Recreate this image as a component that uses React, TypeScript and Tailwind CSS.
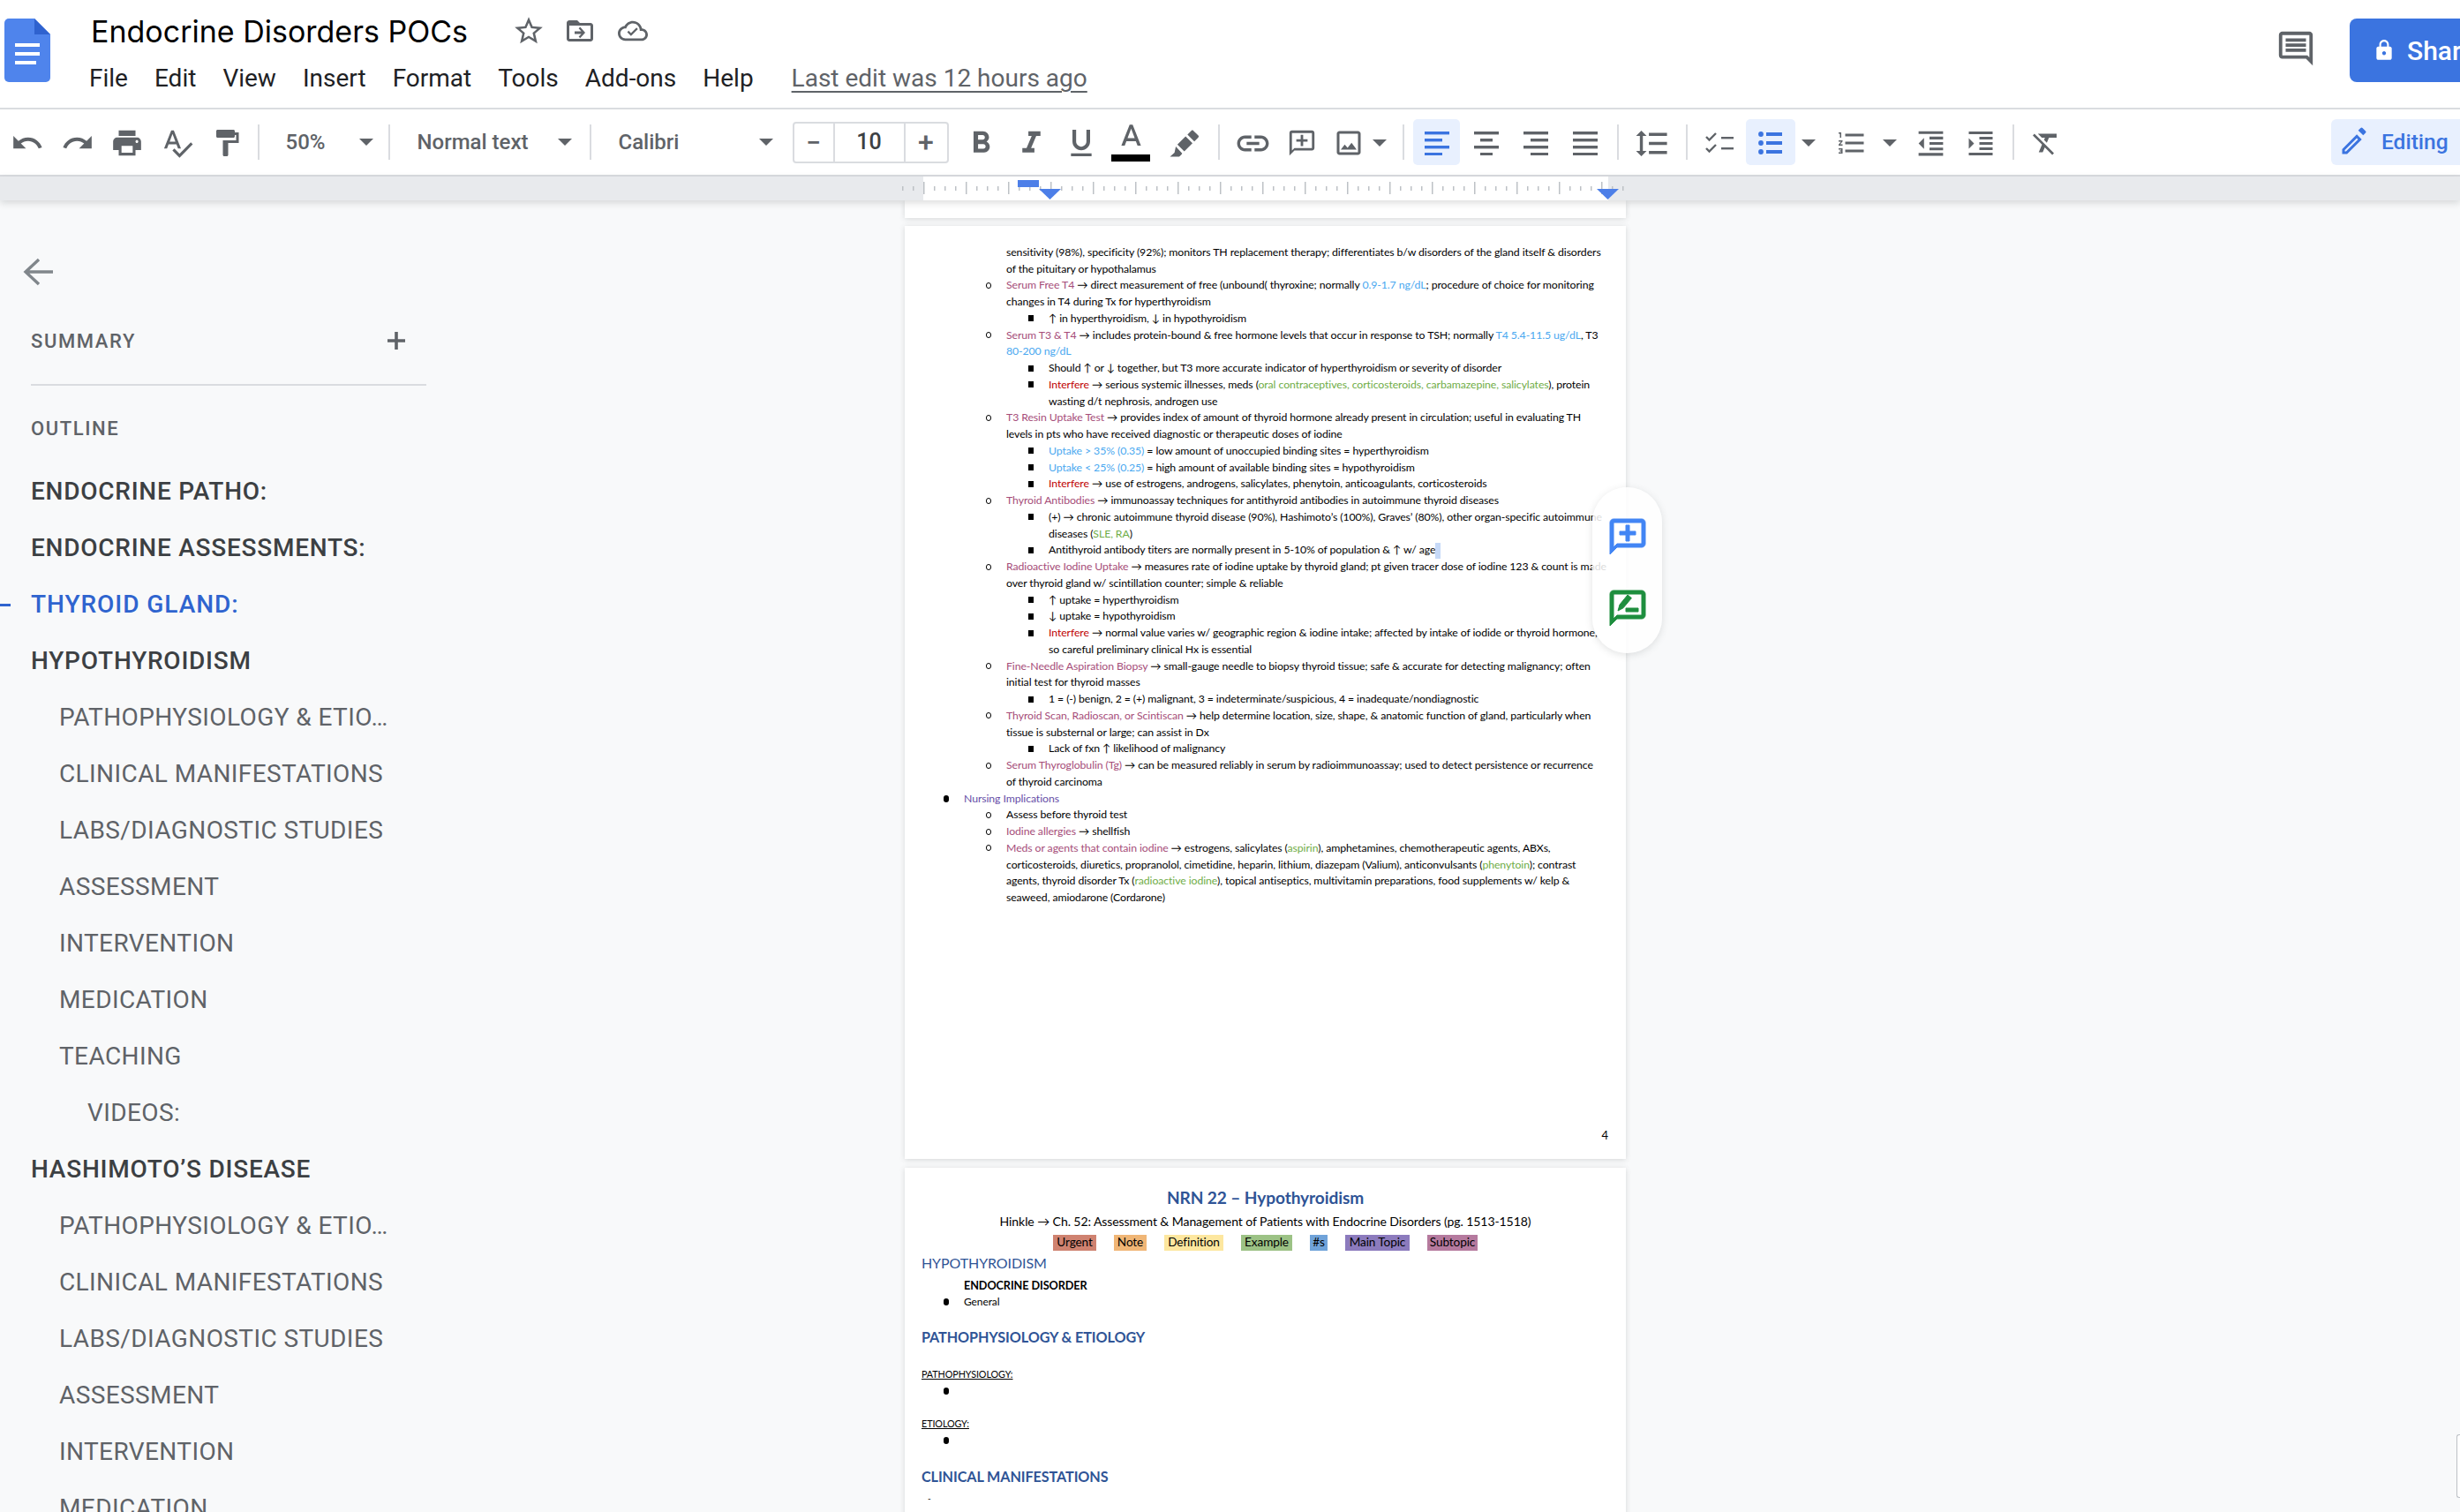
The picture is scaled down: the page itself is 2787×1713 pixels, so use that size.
const Ic = ({ d, size = 38, className = "fill-[#5f6368]" }: { d: string; size?: number; className?: string }) => (
  <svg width={size} height={size} viewBox="0 0 24 24" className={className}>
    <path d={d} />
  </svg>
);

const Caret = () => (
  <svg width="16" height="8" viewBox="0 0 16 8" className="fill-[#5f6368]">
    <path d="M0 0h16L8 8z" />
  </svg>
);

const Sep = ({ ml }: { ml: string }) => <div className={`h-[40px] w-[2px] shrink-0 bg-[#dadce0] ${ml}`} />;

const Cell = ({ w, ml = "", active = false, children }: any) => (
  <div className={`flex h-[52px] shrink-0 items-center justify-center [&>svg]:translate-y-[1px] ${w} ${ml} ${active ? "rounded-[5px] bg-[#e8f0fe]" : ""}`}>
    {children}
  </div>
);

const Lines = ({ widths, className = "fill-[#5f6368]" }: { widths: number[]; className?: string }) => (
  <svg width="28" height="28" viewBox="0 0 28 28" className={className}>
    {widths.map((w, i) => (
      <rect key={i} x={widths[4] === 0 ? 0 : widths[4] === 1 ? (28 - w) / 2 : 28 - w} y={i * 8 + 1} width={w} height="3.4" />
    )).slice(0, 4)}
  </svg>
);

const icons = {
  undo: "M12.5 8c-2.65 0-5.05.99-6.9 2.6L2 7v9h9l-3.62-3.62c1.39-1.16 3.16-1.88 5.12-1.88 3.54 0 6.55 2.31 7.6 5.5l2.37-.78C21.08 11.03 17.15 8 12.5 8z",
  redo: "M18.4 10.6C16.55 8.99 14.15 8 11.5 8c-4.65 0-8.58 3.03-9.96 7.22L3.9 16c1.05-3.19 4.05-5.5 7.6-5.5 1.95 0 3.73.72 5.12 1.88L13 16h9V7l-3.6 3.6z",
  print: "M19 8H5c-1.66 0-3 1.34-3 3v6h4v4h12v-4h4v-6c0-1.66-1.34-3-3-3zm-3 11H8v-5h8v5zm3-7c-.55 0-1-.45-1-1s.45-1 1-1 1 .45 1 1-.45 1-1 1zm-1-9H6v4h12V3z",
  spell: "M12.45 16h2.09L9.43 3H7.57L2.46 16h2.09l1.12-3h5.64l1.14 3zm-6.02-5L8.5 5.48 10.57 11H6.43zm15.16.59l-8.09 8.09L9.83 16l-1.41 1.41 5.09 5.09L23 13l-1.41-1.41z",
  paint: "M18 4V3c0-.55-.45-1-1-1H5c-.55 0-1 .45-1 1v4c0 .55.45 1 1 1h12c.55 0 1-.45 1-1V6h1v4H9v11c0 .55.45 1 1 1h2c.55 0 1-.45 1-1v-9h8V4h-3z",
  bold: "M15.6 10.79c.97-.67 1.65-1.77 1.65-2.79 0-2.26-1.75-4-4-4H7v14h7.04c2.09 0 3.71-1.7 3.71-3.79 0-1.52-.86-2.82-2.15-3.42zM10 6.5h3c.83 0 1.5.67 1.5 1.5s-.67 1.5-1.5 1.5h-3v-3zm3.5 9H10v-3h3.5c.83 0 1.5.67 1.5 1.5s-.67 1.5-1.5 1.5z",
  italic: "M10 4v3h2.21l-3.42 8H6v3h8v-3h-2.21l3.42-8H18V4z",
  underline: "M12 17c3.31 0 6-2.69 6-6V3h-2.5v8c0 1.93-1.57 3.5-3.5 3.5S8.5 12.93 8.5 11V3H6v8c0 3.31 2.69 6 6 6zm-7 2v2h14v-2H5z",
  color: "M11 3L5.5 17h2.25l1.12-3h6.25l1.12 3h2.25L13 3h-2zm-1.38 9L12 5.67 14.38 12H9.62z",
  hilite: "M17.2 2.6l-3 3 5.2 5.2 3-3c.4-.4.4-1 0-1.4l-3.8-3.8c-.4-.4-1-.4-1.4 0zM12.8 7L6.6 13.2l5.2 5.2 6.2-6.2zM5.4 14.6l-1 4.8-3.4 3h7l1.6-1.6 .6-1z",
  link: "M3.9 12c0-1.71 1.39-3.1 3.1-3.1h4V7H7c-2.76 0-5 2.24-5 5s2.24 5 5 5h4v-1.9H7c-1.71 0-3.1-1.39-3.1-3.1zM8 13h8v-2H8v2zm9-6h-4v1.9h4c1.71 0 3.1 1.39 3.1 3.1s-1.39 3.1-3.1 3.1h-4V17h4c2.76 0 5-2.24 5-5s-2.24-5-5-5z",
  comment: "M20 2H4c-1.1 0-2 .9-2 2v18l4-4h14c1.1 0 2-.9 2-2V4c0-1.1-.9-2-2-2zm0 14H6l-2 2V4h16v12zM13 5.5h-2V9H7.5v2H11v3.5h2V11h3.5V9H13z",
  image: "M19 5v14H5V5h14m0-2H5c-1.1 0-2 .9-2 2v14c0 1.1.9 2 2 2h14c1.1 0 2-.9 2-2V5c0-1.1-.9-2-2-2zM14.14 11.86l-3 3.87L9 13.14 6 17h12l-3.86-5.14z",
  spacing: "M6 7h2.5L5 3.5 1.5 7H4v10H1.5L5 20.5 8.5 17H6V7zm4-2v2h12V5H10zm0 14h12v-2H10v2zm0-6h12v-2H10v2z",
  numbered: "M2 17h2v.5H3v1h1v.5H2v1h3v-4H2v1zm1-9h1V4H2v1h1v3zm-1 3h1.8L2 13.1v.9h3v-1H3.2L5 10.9V10H2v1zm5-6v2h14V5H7zm0 14h14v-2H7v2zm0-6h14v-2H7v2z",
  indentLess: "M11 17h10v-2H11v2zm-8-5l4 4V8l-4 4zm0 9h18v-2H3v2zM3 3v2h18V3H3zm8 6h10V7H11v2zm0 4h10v-2H11v2z",
  indentMore: "M3 21h18v-2H3v2zM3 8v8l4-4-4-4zm8 9h10v-2H11v2zM3 3v2h18V3H3zm8 6h10V7H11v2zm0 4h10v-2H11v2z",
  clear: "M3.27 5L2 6.27l6.97 6.97L6.5 19h3l1.57-3.66L16.73 21 18 19.73 3.55 5.27 3.27 5zM6 5v.18L8.82 8h2.4l-.72 1.68 2.1 2.1L14.21 8H20V5H6z",
  star: "M22 9.24l-7.19-.62L12 2 9.19 8.63 2 9.24l5.46 4.73L5.82 21 12 17.27 18.18 21l-1.63-7.03L22 9.24zM12 15.4l-3.76 2.27 1-4.28-3.32-2.88 4.38-.38L12 6.1l1.71 4.04 4.38.38-3.32 2.88 1 4.28L12 15.4z",
  folder: "M20 6h-8l-2-2H4c-1.1 0-2 .9-2 2v12c0 1.1.9 2 2 2h16c1.1 0 2-.9 2-2V8c0-1.1-.9-2-2-2zm0 12H4V8h16v10zM12.16 17.5L16 13.25 12.16 9l-1.1 1.1 2 2.15H8v2h5.06l-2 2.15z",
  cloud: "M19.35 10.04C18.67 6.59 15.64 4 12 4 9.11 4 6.6 5.64 5.35 8.04 2.34 8.36 0 10.91 0 14c0 3.31 2.69 6 6 6h13c2.76 0 5-2.24 5-5 0-2.64-2.05-4.78-4.65-4.96zM19 18H6c-2.21 0-4-1.79-4-4s1.79-4 4-4h.71C7.37 7.69 9.48 6 12 6c3.04 0 5.5 2.46 5.5 5.5v.5H19c1.66 0 3 1.34 3 3s-1.34 3-3 3zM10.5 16l-3-3 1.1-1.1 1.9 1.9 4.4-4.4 1.1 1.1z",
  chat: "M21.99 4c0-1.1-.89-2-1.99-2H4c-1.1 0-2 .9-2 2v12c0 1.1.9 2 2 2h14l4 4-.01-18zM20 4v13.17L18.83 16H4V4h16zM6 12h12v2H6zM6 9h12v2H6zM6 6h12v2H6z",
  lock: "M18 8h-1V6c0-2.76-2.24-5-5-5S7 3.24 7 6v2H6c-1.1 0-2 .9-2 2v10c0 1.1.9 2 2 2h12c1.1 0 2-.9 2-2V10c0-1.1-.9-2-2-2zm-6 9c-1.1 0-2-.9-2-2s.9-2 2-2 2 .9 2 2-.9 2-2 2zm3.1-9H8.9V6c0-1.71 1.39-3.1 3.1-3.1 1.71 0 3.1 1.39 3.1 3.1v2z",
  pencil: "M3 17.25V21h3.75L17.81 9.94l-3.75-3.75L3 17.25zM5.92 19H5v-.92l9.06-9.06.92.92L5.92 19zM20.71 5.04a1 1 0 0 0 0-1.41l-2.34-2.34a1 1 0 0 0-1.41 0l-1.83 1.83 3.75 3.75 1.83-1.83z",
  suggest: "M20 2H4c-1.1 0-2 .9-2 2v18l4-4h14c1.1 0 2-.9 2-2V4c0-1.1-.9-2-2-2zm0 14H6l-2 2V4h16v12zM6.5 13.5l1-3.5 4.5-5.5 2.2 1.8-4.7 5.6-3 1.6zM11 12h7v2h-7z",
};

const Header = () => (
  <header className="flex h-[122px] shrink-0 bg-white">
    <svg width="52" height="72" viewBox="0 0 52 72" className="ml-[5px] mt-[21px] shrink-0">
      <path d="M5 0h29l18 18v49a5 5 0 0 1-5 5H5a5 5 0 0 1-5-5V5a5 5 0 0 1 5-5z" fill="#4f84ec" />
      <path d="M34 0l18 18H34z" fill="#2f62cf" />
      <rect x="12" y="28" width="28" height="4" fill="#fff" />
      <rect x="12" y="38" width="28" height="4" fill="#fff" />
      <rect x="12" y="48" width="24" height="4" fill="#fff" />
    </svg>
    <div className="ml-[46px] flex flex-col pt-[15px]">
      <div className="flex h-[40px] items-center">
        <span className="w-[477px] whitespace-nowrap font-['Inter',sans-serif] text-[34px] text-black">Endocrine Disorders POCs</span>
        <Ic d={icons.star} size={38} />
        <div className="ml-[21px]"><Ic d={icons.folder} size={36} /></div>
        <div className="ml-[25px]"><Ic d={icons.cloud} size={34} /></div>
      </div>
      <div className="-ml-[2px] mt-[16px] flex h-[36px] items-center gap-[30px] font-['Roboto',sans-serif] text-[28px] text-[#202124]">
        <span>File</span>
        <span>Edit</span>
        <span>View</span>
        <span>Insert</span>
        <span>Format</span>
        <span>Tools</span>
        <span>Add-ons</span>
        <span>Help</span>
        <span className="ml-[13px] text-[#5f6368] underline underline-offset-[5px]">Last edit was 12 hours ago</span>
      </div>
    </div>
    <div className="ml-auto mt-[32px] shrink-0"><Ic d={icons.chat} size={46} /></div>
    <div className="ml-[38px] mt-[21px] flex h-[72px] w-[125px] shrink-0 items-center overflow-hidden rounded-l-[8px] bg-[#3b74e0] pl-[26px] font-['Roboto',sans-serif] text-[30px] font-medium text-white">
      <Ic d={icons.lock} size={26} className="shrink-0 fill-white" />
      <span className="ml-[13px] whitespace-nowrap">Share</span>
    </div>
  </header>
);

const Toolbar = () => (
  <div className="flex h-[78px] shrink-0 items-center border-y-2 border-[#dadce0] bg-white pl-[3px] font-['Roboto',sans-serif] text-[#5f6368]">
    <Cell w="w-[56.5px]"><Ic d={icons.undo} /></Cell>
    <Cell w="w-[56.5px]"><Ic d={icons.redo} /></Cell>
    <Cell w="w-[56.5px]"><Ic d={icons.print} /></Cell>
    <Cell w="w-[56.5px]"><Ic d={icons.spell} /></Cell>
    <Cell w="w-[56.5px]"><Ic d={icons.paint} size={36} /></Cell>
    <Sep ml="ml-[6px]" />
    <div className="flex h-[40px] w-[146px] shrink-0 items-center justify-between pl-[30px] pr-[17px] text-[24px] font-medium"><span>50%</span><Caret /></div>
    <Sep ml="" />
    <div className="flex h-[40px] w-[226px] shrink-0 items-center justify-between pl-[31px] pr-[20px] text-[24px] font-medium"><span>Normal text</span><Caret /></div>
    <Sep ml="" />
    <div className="flex h-[40px] w-[228px] shrink-0 items-center justify-between pl-[31px] pr-[22px] text-[24px] font-medium"><span>Calibri</span><Caret /></div>
    <div className="flex h-[47px] w-[177px] shrink-0 rounded-[4px] border-2 border-[#dadce0]">
      <div className="flex w-[46px] items-center justify-center border-r-2 border-[#dadce0] text-[30px] font-medium">−</div>
      <div className="flex w-[80px] items-center justify-center border-r-2 border-[#dadce0] text-[25px] font-medium text-[#3c4043]">10</div>
      <div className="flex flex-1 items-center justify-center text-[32px] font-medium">+</div>
    </div>
    <Cell w="w-[56.5px]" ml="ml-[8.75px]"><Ic d={icons.bold} size={41} /></Cell>
    <Cell w="w-[56.5px]"><Ic d={icons.italic} size={41} /></Cell>
    <Cell w="w-[56.5px]"><Ic d={icons.underline} size={40} /></Cell>
    <div className="flex h-[52px] w-[56.5px] shrink-0 flex-col items-center justify-start pt-[1px]">
      <Ic d={icons.color} size={41} />
      <div className="-mt-[2px] h-[8px] w-[44px] shrink-0 bg-black" />
    </div>
    <Cell w="w-[56.5px]" ml="ml-[4.75px]"><Ic d={icons.hilite} size={36} /></Cell>
    <Sep ml="ml-[9.25px]" />
    <Cell w="w-[55.5px]" ml="ml-[9.5px]"><Ic d={icons.link} size={43} /></Cell>
    <Cell w="w-[55.5px]"><Ic d={icons.comment} size={34} /></Cell>
    <Cell w="w-[52px]"><Ic d={icons.image} size={36} /></Cell>
    <Cell w="w-[18px]"><Caret /></Cell>
    <Sep ml="ml-[17px]" />
    <Cell w="w-[52.5px]" ml="ml-[10px]" active><Lines widths={[28, 20, 28, 20, 0]} className="fill-[#3b74e0]" /></Cell>
    <Cell w="w-[60px]"><Lines widths={[28, 14, 28, 14, 1]} /></Cell>
    <Cell w="w-[52px]"><Lines widths={[28, 20, 28, 20, 2]} /></Cell>
    <Cell w="w-[60px]"><Lines widths={[28, 28, 28, 28, 0]} /></Cell>
    <Sep ml="ml-[6px]" />
    <Cell w="w-[76px]"><Ic d={icons.spacing} size={41} /></Cell>
    <Sep ml="" />
    <Cell w="w-[66px]">
      <svg width="32" height="26" viewBox="0 0 32 26" className="ml-[6px] fill-[#5f6368] stroke-[#5f6368]">
        <path d="M1 6l3.5 3.5L12 2M1 19l3.5 3.5L12 15" fill="none" strokeWidth="2.4" />
        <rect x="18" y="6" width="14" height="2.4" strokeWidth="0" />
        <rect x="18" y="18" width="14" height="2.4" strokeWidth="0" />
      </svg>
    </Cell>
    <Cell w="w-[56px]" active>
      <svg width="27" height="26" viewBox="0 0 27 26" className="fill-[#3b74e0]">
        <circle cx="3" cy="3" r="2.9" />
        <circle cx="3" cy="13" r="2.9" />
        <circle cx="3" cy="23" r="2.9" />
        <rect x="9" y="1" width="18" height="4" />
        <rect x="9" y="11" width="18" height="4" />
        <rect x="9" y="21" width="18" height="4" />
      </svg>
    </Cell>
    <Cell w="w-[30px]"><Caret /></Cell>
    <Cell w="w-[68px]"><Ic d={icons.numbered} size={36} /></Cell>
    <Cell w="w-[18px]"><Caret /></Cell>
    <Cell w="w-[76px]"><Ic d={icons.indentLess} size={37} /></Cell>
    <Cell w="w-[36px]"><Ic d={icons.indentMore} size={37} /></Cell>
    <Sep ml="ml-[18px]" />
    <Cell w="w-[72px]"><Ic d={icons.clear} size={36} /></Cell>
    <div className="ml-auto flex h-[52px] w-[146px] shrink-0 items-center rounded-l-[6px] bg-[#e8f0fe] pl-[8px] text-[24.5px] font-medium text-[#3b74e0]">
      <Ic d={icons.pencil} size={36} className="fill-[#3b74e0]" />
      <span className="ml-[13px]">Editing</span>
    </div>
  </div>
);

const ticks = Array.from({ length: 69 }, (_, i) => 1022 + i * 12);

const Ruler = () => (
  <div className="relative z-10 h-[27px] shrink-0 bg-[#e8eaed] shadow-[0_3px_8px_rgba(60,64,67,0.18)]">
    <svg width="2787" height="27" viewBox="0 0 2787 27" className="block">
      <rect x="1046" y="0" width="776" height="27" fill="#fff" />
      {ticks.map((x) => (
        <rect key={x} x={x} y={(x - 1286) % 48 === 0 ? 6 : 11} width="1.5" height={(x - 1286) % 48 === 0 ? 14 : 5} fill="#bdc1c6" />
      ))}
      <rect x="1153" y="4" width="24" height="8" fill="#4d7fe8" />
      <path d="M1177 14h25l-12.5 12z" fill="#4d7fe8" />
      <path d="M1809 14h25l-12.5 12z" fill="#4d7fe8" />
    </svg>
  </div>
);

const outline: [string, number][] = [
  ["ENDOCRINE PATHO:", 1],
  ["ENDOCRINE ASSESSMENTS:", 1],
  ["THYROID GLAND:", 0],
  ["HYPOTHYROIDISM", 1],
  ["PATHOPHYSIOLOGY & ETIO…", 2],
  ["CLINICAL MANIFESTATIONS", 2],
  ["LABS/DIAGNOSTIC STUDIES", 2],
  ["ASSESSMENT", 2],
  ["INTERVENTION", 2],
  ["MEDICATION", 2],
  ["TEACHING", 2],
  ["VIDEOS:", 3],
  ["HASHIMOTO’S DISEASE", 1],
  ["PATHOPHYSIOLOGY & ETIO…", 2],
  ["CLINICAL MANIFESTATIONS", 2],
  ["LABS/DIAGNOSTIC STUDIES", 2],
  ["ASSESSMENT", 2],
  ["INTERVENTION", 2],
  ["MEDICATION", 2],
];

const outlineStyle: Record<number, string> = {
  0: "pl-[35px] font-medium tracking-[0.95px] text-[#2f64cf]",
  1: "pl-[35px] font-medium tracking-[0.75px] text-[#3c4043]",
  2: "pl-[67px] tracking-[0.4px] text-[#5f6368]",
  3: "pl-[99px] tracking-[0.4px] text-[#5f6368]",
};

const Sidebar = () => (
  <aside className="w-[490px] shrink-0 pt-[65px] font-['Roboto',sans-serif]">
    <svg width="34" height="32" viewBox="0 0 34 32" className="ml-[26px] fill-none stroke-[#80868b] stroke-[3.4]">
      <path d="M34 16H3M18 2L3 16l15 14" />
    </svg>
    <div className="ml-[35px] mt-[42px] flex h-[40px] w-[448px] items-center justify-between pr-[24px] text-[22px] font-medium tracking-[1.6px] text-[#5f6368]">
      <span>SUMMARY</span>
      <svg width="20" height="20" viewBox="0 0 20 20" className="fill-[#5f6368]">
        <path d="M8.2 0h3.6v8.2H20v3.6h-8.2V20H8.2v-8.2H0V8.2h8.2z" />
      </svg>
    </div>
    <div className="ml-[35px] mt-[29px] h-[2px] w-[448px] bg-[#dadce0]" />
    <div className="ml-[35px] mt-[33px] flex h-[30px] items-center text-[22px] font-medium tracking-[1.6px] text-[#5f6368]">OUTLINE</div>
    <div className="mt-[24.5px]">
      {outline.map(([t, l], i) => (
        <div key={i} className={`relative flex h-[64px] items-center whitespace-nowrap text-[28px] ${outlineStyle[l]}`}>
          {l === 0 && <div className="absolute left-0 top-[31px] h-[3px] w-[12px] bg-[#2f64cf]" />}
          {t}
        </div>
      ))}
    </div>
  </aside>
);

type Seg = string | [string, "s" | "b" | "g" | "r" | "p"];
const tone = {
  s: "text-[#a64d79]",
  b: "text-[#4aa8f0]",
  g: "text-[#70ad47]",
  r: "text-[#c00000]",
  p: "text-[#674ea7]",
};

const gutter: Record<number, string> = {
  1: "w-[67px]",
  2: "w-[115px]",
  3: "w-[163px]",
};

const Bullet = ({ level }: { level: number }) => {
  if (level === 1) return <span className="h-[8px] w-[6px] rounded-full bg-black" />;
  if (level === 2) return <span className="h-[7px] w-[6px] rounded-full border border-black" />;
  return <span className="h-[7px] w-[6px] bg-black" />;
};

const Line = ({ level, bullet = false, segs, children }: { level: number; bullet?: boolean; segs: Seg[]; children?: any }) => (
  <div className="flex h-[18.75px] shrink-0 items-center whitespace-nowrap">
    <div className={`flex shrink-0 justify-end pr-[17px] ${gutter[level]}`}>{bullet && <Bullet level={level} />}</div>
    <span>
      {segs.map((s, i) => (typeof s === "string" ? <span key={i}>{s}</span> : <span key={i} className={tone[s[1]]}>{s[0]}</span>))}
      {children}
    </span>
  </div>
);

const lines: [number, boolean, Seg[]][] = [
  [2, false, ["sensitivity (98%), specificity (92%); monitors TH replacement therapy; differentiates b/w disorders of the gland itself & disorders"]],
  [2, false, ["of the pituitary or hypothalamus"]],
  [2, true, [["Serum Free T4", "s"], " → direct measurement of free (unbound( thyroxine; normally ", ["0.9-1.7 ng/dL", "b"], "; procedure of choice for monitoring"]],
  [2, false, ["changes in T4 during Tx for hyperthyroidism"]],
  [3, true, ["↑ in hyperthyroidism, ↓ in hypothyroidism"]],
  [2, true, [["Serum T3 & T4", "s"], " → includes protein-bound & free hormone levels that occur in response to TSH; normally ", ["T4 5.4-11.5 ug/dL", "b"], ", T3"]],
  [2, false, [["80-200 ng/dL", "b"]]],
  [3, true, ["Should ↑ or ↓ together, but T3 more accurate indicator of hyperthyroidism or severity of disorder"]],
  [3, true, [["Interfere", "r"], " → serious systemic illnesses, meds (", ["oral contraceptives, corticosteroids, carbamazepine, salicylates", "g"], "), protein"]],
  [3, false, ["wasting d/t nephrosis, androgen use"]],
  [2, true, [["T3 Resin Uptake Test", "s"], " → provides index of amount of thyroid hormone already present in circulation; useful in evaluating TH"]],
  [2, false, ["levels in pts who have received diagnostic or therapeutic doses of iodine"]],
  [3, true, [["Uptake > 35% (0.35)", "b"], " = low amount of unoccupied binding sites = hyperthyroidism"]],
  [3, true, [["Uptake < 25% (0.25)", "b"], " = high amount of available binding sites = hypothyroidism"]],
  [3, true, [["Interfere", "r"], " → use of estrogens, androgens, salicylates, phenytoin, anticoagulants, corticosteroids"]],
  [2, true, [["Thyroid Antibodies", "s"], " → immunoassay techniques for antithyroid antibodies in autoimmune thyroid diseases"]],
  [3, true, ["(+) → chronic autoimmune thyroid disease (90%), Hashimoto’s (100%), Graves’ (80%), other organ-specific autoimmune"]],
  [3, false, ["diseases (", ["SLE, RA", "g"], ")"]],
];

const lines2: [number, boolean, Seg[]][] = [
  [2, true, [["Radioactive Iodine Uptake", "s"], " → measures rate of iodine uptake by thyroid gland; pt given tracer dose of iodine 123 & count is made"]],
  [2, false, ["over thyroid gland w/ scintillation counter; simple & reliable"]],
  [3, true, ["↑ uptake = hyperthyroidism"]],
  [3, true, ["↓ uptake = hypothyroidism"]],
  [3, true, [["Interfere", "r"], " → normal value varies w/ geographic region & iodine intake; affected by intake of iodide or thyroid hormone,"]],
  [3, false, ["so careful preliminary clinical Hx is essential"]],
  [2, true, [["Fine-Needle Aspiration Biopsy", "s"], " → small-gauge needle to biopsy thyroid tissue; safe & accurate for detecting malignancy; often"]],
  [2, false, ["initial test for thyroid masses"]],
  [3, true, ["1 = (-) benign, 2 = (+) malignant, 3 = indeterminate/suspicious, 4 = inadequate/nondiagnostic"]],
  [2, true, [["Thyroid Scan, Radioscan, or Scintiscan", "s"], " → help determine location, size, shape, & anatomic function of gland, particularly when"]],
  [2, false, ["tissue is substernal or large; can assist in Dx"]],
  [3, true, ["Lack of fxn ↑ likelihood of malignancy"]],
  [2, true, [["Serum Thyroglobulin (Tg)", "s"], " → can be measured reliably in serum by radioimmunoassay; used to detect persistence or recurrence"]],
  [2, false, ["of thyroid carcinoma"]],
  [1, true, [["Nursing Implications", "p"]]],
  [2, true, ["Assess before thyroid test"]],
  [2, true, [["Iodine allergies", "s"], " → shellfish"]],
  [2, true, [["Meds or agents that contain iodine", "s"], " → estrogens, salicylates (", ["aspirin", "g"], "), amphetamines, chemotherapeutic agents, ABXs,"]],
  [2, false, ["corticosteroids, diuretics, propranolol, cimetidine, heparin, lithium, diazepam (Valium), anticonvulsants (", ["phenytoin", "g"], "); contrast"]],
  [2, false, ["agents, thyroid disorder Tx (", ["radioactive iodine", "g"], "), topical antiseptics, multivitamin preparations, food supplements w/ kelp &"]],
  [2, false, ["seaweed, amiodarone (Cordarone)"]],
];

const labels = [
  ["Urgent", "bg-[#cf8270]", "w-[49px]"],
  ["Note", "bg-[#f0b676]", "w-[37px]"],
  ["Definition", "bg-[#fde79f]", "w-[67px]"],
  ["Example", "bg-[#9cc285]", "w-[58px]"],
  ["#s", "bg-[#70a3d9]", "w-[20px]"],
  ["Main Topic", "bg-[#8c7bbd]", "w-[73px]"],
  ["Subtopic", "bg-[#b57a9e]", "w-[57px]"],
];

const pageClass = "w-[817px] bg-white text-[12.3px] tracking-[-0.1px] text-black shadow-[0_1px_6px_rgba(60,64,67,0.18)]";

const Doc = () => (
  <main className="ml-[535px] flex w-[817px] shrink-0 flex-col font-['Lato',sans-serif]">
    <div className={`h-[20px] shrink-0 ${pageClass}`} />
    <div className={`mt-[9px] flex h-[1057px] shrink-0 flex-col pt-[20.6px] ${pageClass}`}>
      {lines.map(([l, b, s], i) => <Line key={i} level={l} bullet={b} segs={s} />)}
      <Line level={3} bullet segs={["Antithyroid antibody titers are normally present in 5-10% of population & ↑ w/ age"]}>
        <span className="inline-block h-[18px] w-[6px] align-middle bg-[#c6d9f7]" />
      </Line>
      {lines2.map(([l, b, s], i) => <Line key={i} level={l} bullet={b} segs={s} />)}
      <div className="mr-[20px] mt-auto pb-[17px] text-right text-[13px]">4</div>
    </div>
    <div className={`mt-[9.5px] h-[1000px] shrink-0 pt-[24px] ${pageClass}`}>
      <div className="flex h-[22px] items-center justify-center text-[19.1px] font-bold text-[#2f5496]">NRN 22 – Hypothyroidism</div>
      <div className="mt-[5.5px] flex h-[20px] items-center justify-center text-[14.05px]">Hinkle → Ch. 52: Assessment &amp; Management of Patients with Endocrine Disorders (pg. 1513-1518)</div>
      <div className="ml-[168px] mt-[4.5px] flex h-[18px] gap-[20px] text-[13.6px]">
        {labels.map(([t, bg, w]) => (
          <div key={t} className={`flex shrink-0 items-center justify-center whitespace-nowrap ${bg} ${w}`}>{t}</div>
        ))}
      </div>
      <div className="ml-[19px] mt-[3px] flex h-[22px] items-center text-[16px] text-[#2f5496]">HYPOTHYROIDISM</div>
      <div className="ml-[67px] mt-[6px] flex h-[18px] items-center text-[12.7px] font-bold">ENDOCRINE DISORDER</div>
      <div className="mt-[1.5px] flex h-[16px] items-center text-[12px]">
        <div className="flex w-[67px] shrink-0 justify-end pr-[17px]"><Bullet level={1} /></div>General
      </div>
      <div className="ml-[19px] mt-[21px] flex h-[22px] items-center text-[16.2px] font-bold text-[#2f5496]">PATHOPHYSIOLOGY &amp; ETIOLOGY</div>
      <div className="ml-[19px] mt-[23px] flex h-[16px] items-center text-[10.8px] underline">PATHOPHYSIOLOGY:</div>
      <div className="mt-[4px] flex h-[14px] items-center">
        <div className="flex w-[67px] justify-end pr-[17px]"><Bullet level={1} /></div>
      </div>
      <div className="ml-[19px] mt-[22px] flex h-[16px] items-center text-[10.8px] underline">ETIOLOGY:</div>
      <div className="mt-[4px] flex h-[14px] items-center">
        <div className="flex w-[67px] justify-end pr-[17px]"><Bullet level={1} /></div>
      </div>
      <div className="ml-[19px] mt-[23px] flex h-[22px] items-center text-[16.2px] font-bold text-[#2f5496]">CLINICAL MANIFESTATIONS</div>
      <div className="ml-[26px] mt-[6px] flex h-[14px] items-center text-[10px]">-</div>
    </div>
  </main>
);

export default function App() {
  return (
    <div className="relative flex h-[1713px] w-[2787px] flex-col overflow-hidden bg-[#f8f9fa]">
      <Header />
      <Toolbar />
      <Ruler />
      <div className="flex min-h-0 flex-1">
        <Sidebar />
        <Doc />
      </div>
      <div className="absolute left-[1804px] top-[552px] z-20 flex h-[188px] w-[79px] flex-col items-center gap-[33px] rounded-full bg-white/85 pt-[32px] shadow-[0_2px_8px_rgba(60,64,67,0.15)]">
        <Ic d={icons.comment} size={48} className="fill-[#4285f4] stroke-[#4285f4] stroke-[0.5]" />
        <Ic d={icons.suggest} size={48} className="fill-[#1e8e3e] stroke-[#1e8e3e] stroke-[0.5]" />
      </div>
      <div className="absolute right-0 top-[1625px] z-20 h-[72px] w-[4px] rounded-l-[3px] border border-r-0 border-[#bdc1c6] bg-white" />
    </div>
  );
}
